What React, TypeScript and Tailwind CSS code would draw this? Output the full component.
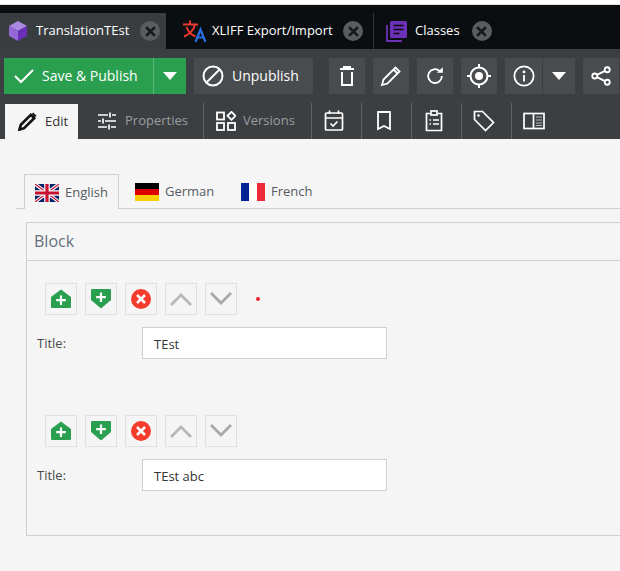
import React from "react";

function Stroke({ children, size = 24, className = "" }: { children: React.ReactNode; size?: number; className?: string }) {
  return (
    <svg width={size} height={size} viewBox="0 0 24 24" fill="none" stroke="currentColor" strokeWidth={2} className={className}>
      {children}
    </svg>
  );
}

function Close() {
  return (
    <span className="flex items-center justify-center w-5 h-5 rounded-full bg-[#5a5c5e] shrink-0">
      <svg width="11" height="11" viewBox="0 0 10 10" stroke="#16181a" strokeWidth="2.4"><path d="M1 1l8 8M9 1l-8 8" /></svg>
    </span>
  );
}

function Caret() {
  return <svg width="14" height="8" viewBox="0 0 14 8"><path d="M0 0h14l-7 8z" fill="#fff" /></svg>;
}

function ToolBtn({ children, w = "w-9" }: { children: React.ReactNode; w?: string }) {
  return <div className={`${w} h-9 bg-[#494c4f] flex items-center justify-center text-white`}>{children}</div>;
}

function Sep() {
  return <div className="w-px h-9 bg-[#5f6265] shrink-0" />;
}

function SubIcon({ children }: { children: React.ReactNode }) {
  return <div className="w-[49px] h-9 flex items-center justify-center text-white shrink-0 pr-[5px]">{children}</div>;
}

function UkFlag() {
  return (
    <svg width="24" height="18" viewBox="0 0 24 18" className="shrink-0">
      <rect width="24" height="18" fill="#012169" />
      <path d="M0 0l24 18M24 0L0 18" stroke="#fff" strokeWidth="3.4" />
      <path d="M0 0l24 18M24 0L0 18" stroke="#c8102e" strokeWidth="1.2" />
      <path d="M12 0v18M0 9h24" stroke="#fff" strokeWidth="5.6" />
      <path d="M12 0v18M0 9h24" stroke="#c8102e" strokeWidth="3.2" />
    </svg>
  );
}
function DeFlag() {
  return (
    <div className="w-6 h-[18px] flex flex-col shrink-0">
      <div className="flex-1 bg-black" />
      <div className="flex-1 bg-[#dd0000]" />
      <div className="flex-1 bg-[#ffce00]" />
    </div>
  );
}
function FrFlag() {
  return (
    <div className="w-6 h-[18px] flex shrink-0">
      <div className="flex-1 bg-[#002395]" />
      <div className="flex-1 bg-white" />
      <div className="flex-1 bg-[#ed2939]" />
    </div>
  );
}

function SmallBtn({ children }: { children: React.ReactNode }) {
  return <div className="w-8 h-8 border border-[#e0e0e0] flex items-center justify-center">{children}</div>;
}

function BlockItem({ value, dot }: { value: string; dot?: boolean }) {
  return (
    <div>
      <div className="flex items-center gap-2 pl-[18px]">
        <SmallBtn>
          <svg width="20" height="20" viewBox="0 0 20 20">
            <path d="M10 0.500l10 7.500V18a1 1 0 0 1-1 1H1a1 1 0 0 1-1-1V8z" fill="#2a9f50" />
            <path d="M10 6.500v9.500M5.200 11.200h9.600" stroke="#fff" strokeWidth="2.200" />
          </svg>
        </SmallBtn>
        <SmallBtn>
          <svg width="20" height="20" viewBox="0 0 20 20">
            <path d="M1 0h18a1 1 0 0 1 1 1v10l-10 8.500L0 11V1a1 1 0 0 1 1-1z" fill="#2a9f50" />
            <path d="M10 3.500v9.500M5.200 8.200h9.600" stroke="#fff" strokeWidth="2.200" />
          </svg>
        </SmallBtn>
        <SmallBtn>
          <svg width="20" height="20" viewBox="0 0 20 20">
            <circle cx="10" cy="10" r="10" fill="#f43b2c" />
            <path d="M6 6l8 8M14 6l-8 8" stroke="#fff" strokeWidth="2.500" />
          </svg>
        </SmallBtn>
        <SmallBtn>
          <svg width="22" height="14" viewBox="0 0 22 14" fill="none" stroke="#b8b8b8" strokeWidth="2.800"><path d="M1 13l10-10 10 10" /></svg>
        </SmallBtn>
        <SmallBtn>
          <svg width="22" height="14" viewBox="0 0 22 14" fill="none" stroke="#a8a8a8" strokeWidth="2.800"><path d="M1 1l10 10 10-10" /></svg>
        </SmallBtn>
        {dot && <div className="w-1 h-1 rounded-full bg-[#e8232a] ml-[11px]" />}
      </div>
      <div className="flex items-center mt-3 pl-[10px]">
        <span className="w-[105px] text-[13px] text-[#4a4a4a] pt-[2px]">Title:</span>
        <div className="w-[245px] h-8 border border-[#cfcfcf] bg-white flex items-center px-[11px] pt-[3px] text-[13px] text-[#333]">{value}</div>
      </div>
    </div>
  );
}

export default function App() {
  return (
    <div className="w-[620px] h-[571px] overflow-hidden bg-[#f5f5f5] flex flex-col font-['Open_Sans',sans-serif]">
      <div className="h-[4px] bg-white" />
      <div className="h-px bg-[#e2e2e2]" />
      {/* tab strip */}
      <div className="h-11 bg-[#0b0e11] flex items-end text-white text-[13px]">
        <div className="w-[166px] h-9 bg-[#3a3d40] flex items-center pl-2 pr-[6px]">
          <svg width="20" height="22" viewBox="0 0 20 22" className="shrink-0">
            <path d="M10 1l9 5-9 5-9-5z" fill="#a98ae0" />
            <path d="M1 6l9 5v10l-9-5z" fill="#9468d6" />
            <path d="M19 6l-9 5v10l9-5z" fill="#6a2fb5" />
          </svg>
          <span className="ml-2 flex-1 whitespace-nowrap">TranslationTEst</span>
          <Close />
        </div>
        <div className="w-[208px] h-9 flex items-center pl-[17px] pr-[10px] border-r border-[#33363a]">
          <svg width="23" height="24" viewBox="0 0 23 24" className="shrink-0" fill="none">
            <path d="M0 5.500h15M7 1.500v4M12 5.500c-1 5-5.500 10-11 12M3.500 8c1.500 4 5 8 9 9.500" stroke="#f03a2e" strokeWidth="1.900" />
            <path d="M12.500 23l5-12.500 5 12.500M14.500 18.500h6" stroke="#2a6fe0" strokeWidth="2.200" />
          </svg>
          <span className="ml-[6px] flex-1 whitespace-nowrap">XLIFF Export/Import</span>
          <Close />
        </div>
        <div className="h-9 flex items-center pl-[12px] gap-[8px]">
          <svg width="21" height="21" viewBox="0 0 21 21" className="shrink-0">
            <path d="M1 4v16h15" fill="none" stroke="#6d31b8" strokeWidth="1.800" />
            <rect x="4" y="0" width="17" height="17" rx="1.500" fill="#6d31b8" />
            <path d="M7.500 4.500h10M7.500 8.500h10M7.500 12.500h6" stroke="#0b0e11" strokeWidth="1.600" />
          </svg>
          <span className="mr-[4px]">Classes</span>
          <Close />
        </div>
      </div>
      {/* toolbar */}
      <div className="h-[90px] bg-[#3c3f42] flex flex-col">
        <div className="flex items-center h-9 mt-[9px] pl-1 text-white text-sm">
          <div className="w-[182px] h-9 bg-[#2a9f50] flex items-center">
            <div className="w-[149px] flex items-center pl-[9px] gap-[7px]">
              <svg width="22" height="18" viewBox="0 0 22 18" fill="none" stroke="#fff" strokeWidth="2"><path d="M2 9l6 6L20 3" /></svg>
              <span>Save &amp; Publish</span>
            </div>
            <div className="w-px h-9 bg-[#5cb87c]" />
            <div className="flex-1 flex justify-center"><Caret /></div>
          </div>
          <div className="w-[119px] h-9 bg-[#494c4f] ml-2 flex items-center pl-2 gap-[8px]">
            <svg width="22" height="22" viewBox="0 0 22 22" fill="none" stroke="#fff" strokeWidth="2"><circle cx="11" cy="11" r="9.500" /><path d="M4.500 17.500l13-13" /></svg>
            <span>Unpublish</span>
          </div>
          <div className="flex ml-4 gap-2">
            <ToolBtn>
              <Stroke><path d="M5 5h14M8 3h8M7 8v13h10V8" /></Stroke>
            </ToolBtn>
            <ToolBtn>
              <svg width="24" height="24" viewBox="0 0 24 24" fill="none" stroke="#fff" strokeWidth="1.800"><path d="M3 21l1.500-5.500L16.500 3.500l4 4L8.500 19.500zM14.500 5.500l4 4" /></svg>
            </ToolBtn>
            <ToolBtn>
              <Stroke size={22}><path d="M19.500 12a7.500 7.500 0 1 1-2.500-5.500" /><path d="M14 8.500h6.500V2.500z" fill="#fff" stroke="none" /></Stroke>
            </ToolBtn>
            <ToolBtn>
              <svg width="24" height="24" viewBox="0 0 24 24" fill="none" stroke="#fff" strokeWidth="2"><circle cx="12" cy="12" r="8.500" /><circle cx="12" cy="12" r="4" fill="#fff" stroke="none" /><path d="M12 0v4M12 20v4M0 12h4M20 12h4" /></svg>
            </ToolBtn>
            <div className="flex gap-px">
              <ToolBtn w="w-[37px]">
                <svg width="22" height="22" viewBox="0 0 24 24" fill="none" stroke="#fff" strokeWidth="2"><circle cx="12" cy="12" r="10.500" /><path d="M12 11v7" /><circle cx="12" cy="7.500" r="1.500" fill="#fff" stroke="none" /></svg>
              </ToolBtn>
              <ToolBtn w="w-8"><Caret /></ToolBtn>
            </div>
            <ToolBtn>
              <svg width="20" height="20" viewBox="0 0 24 24" fill="none" stroke="#fff" strokeWidth="2.200"><circle cx="19.500" cy="4.500" r="3" /><circle cx="4.500" cy="12" r="3" /><circle cx="19.500" cy="19.500" r="3" /><path d="M7.200 10.600l9.600-4.800M7.200 13.400l9.600 4.800" /></svg>
            </ToolBtn>
          </div>
        </div>
        <div className="flex items-end h-9 mt-[9px] pl-[5px] text-[13px] text-[#9a9da0]">
          <div className="w-[73px] h-[35px] bg-[#f5f5f5] flex items-center pl-[13px] gap-[8px] text-[#333]">
            <svg width="19" height="19" viewBox="0 0 20 20"><path d="M1.500 18.500l1.500-5L13.500 3l3.500 3.500L6.500 17z" fill="none" stroke="#111" strokeWidth="2.800" /><path d="M14.500 2l1.500-1.500 3.500 3.500L18 5.500z" fill="#111" /></svg>
            <span>Edit</span>
          </div>
          <div className="w-[125px] h-9 flex items-center pl-[19px] gap-2 ml-0">
            <svg width="20" height="20" viewBox="0 0 20 20" fill="none" stroke="#fff" strokeWidth="1.700" className="shrink-0"><path d="M1 4h10M15 4h4M13 1.500v5M1 10h3M8 10h11M6 7.500v5M1 16h9M14 16h5M12 13.500v5" /></svg>
            <span>Properties</span>
          </div>
          <Sep />
          <div className="w-[107px] h-9 flex items-center pl-3 gap-[7px]">
            <svg width="20" height="20" viewBox="0 0 20 20" fill="none" stroke="#fff" strokeWidth="1.800" className="shrink-0"><rect x="1" y="1.500" width="7" height="7" /><rect x="1" y="12" width="7" height="7" /><rect x="12" y="12" width="7" height="7" /><path d="M15.500 0.800l4 4-4 4-4-4z" /></svg>
            <span>Versions</span>
          </div>
          <Sep />
          <SubIcon>
            <svg width="20" height="22" viewBox="0 0 20 22" fill="none" stroke="#fff" strokeWidth="1.700"><rect x="1.500" y="3" width="17" height="17" rx="1" /><path d="M1.500 8h17M5.500 0.500V4M14.500 0.500V4M6.500 13.500l2.500 2.500 4.500-4.500" /></svg>
          </SubIcon>
          <Sep />
          <SubIcon>
            <svg width="16" height="20" viewBox="0 0 16 20" fill="none" stroke="#fff" strokeWidth="1.800"><path d="M2 1h12v17l-6-3-6 3z" /></svg>
          </SubIcon>
          <Sep />
          <SubIcon>
            <svg width="20" height="22" viewBox="0 0 20 22" fill="none" stroke="#fff" strokeWidth="1.700"><path d="M6 3.500H2.500v17h15v-17H14" /><rect x="7" y="1" width="6" height="4" /><path d="M5.500 10h1.500M9 10h6M5.500 14h1.500M9 14h6" /></svg>
          </SubIcon>
          <Sep />
          <SubIcon>
            <svg width="22" height="22" viewBox="0 0 22 22" fill="none" stroke="#fff" strokeWidth="1.700"><path d="M1.500 1.500h8l11 11-8 8-11-11z" /><circle cx="5.500" cy="5.500" r="1.200" fill="#fff" stroke="none" /></svg>
          </SubIcon>
          <Sep />
          <SubIcon>
            <svg width="22" height="18" viewBox="0 0 22 18" fill="none" stroke="#fff" strokeWidth="1.700"><rect x="1" y="1.500" width="20" height="15" /><path d="M10.500 1.500v15" /><path d="M13 5h6M13 8h6M13 11h6M13 13.500h6" strokeWidth="1" stroke="#bbb" /></svg>
          </SubIcon>
        </div>
      </div>
      {/* content */}
      <div className="flex-1 pt-[35px]">
        <div className="ml-4 border-b border-[#cfcfcf] h-[35px] flex items-end text-[13px] text-[#555a62]">
          <div className="ml-2 w-[95px] h-[35px] -mb-px border border-b-0 border-[#cfcfcf] bg-[#f5f5f5] flex items-center pl-[10px] gap-[6px] pt-[2px]">
            <UkFlag /><span>English</span>
          </div>
          <div className="w-[106px] h-[35px] flex items-center pl-4 gap-[6px] pt-[2px]">
            <DeFlag /><span>German</span>
          </div>
          <div className="h-[35px] flex items-center pl-[16px] gap-[6px] pt-[2px]">
            <FrFlag /><span>French</span>
          </div>
        </div>
        <div className="ml-[26px] mt-[13px] h-[314px] border border-r-0 border-[#cfcfcf]">
          <div className="h-[38px] border-b border-[#cfcfcf] flex items-center pl-[7px] pb-[2px] text-base text-[#666e7e]">Block</div>
          <div className="pt-[22px]">
            <BlockItem value="TEst" dot />
            <div className="mt-[56px]">
              <BlockItem value="TEst abc" />
            </div>
          </div>
        </div>
      </div>
    </div>
  );
}
